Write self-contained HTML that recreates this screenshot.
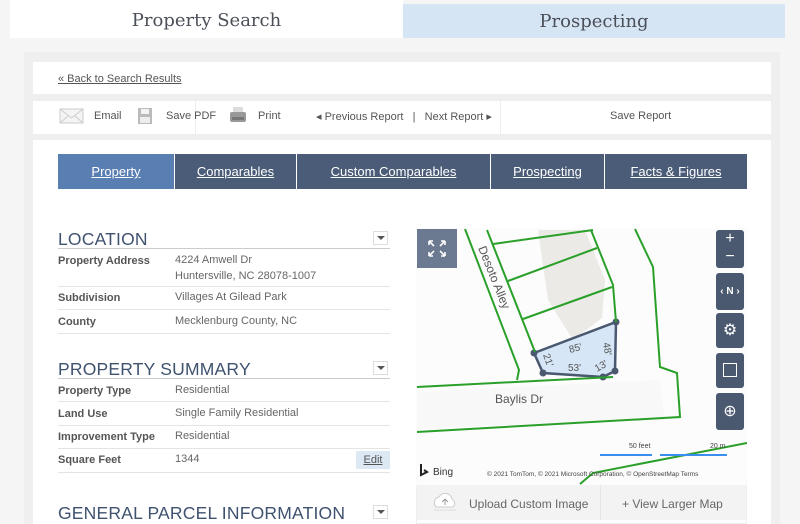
<!DOCTYPE html>
<html><head><style>
*{margin:0;padding:0;box-sizing:border-box}
body{width:800px;height:524px;overflow:hidden;background:#f5f5f5;font-family:"Liberation Sans",sans-serif;position:relative;color:#555}
.a{position:absolute}
.t{font-size:11px;color:#555}
.lbl{position:absolute;left:58px;font-size:11px;font-weight:bold;color:#555}
.val{position:absolute;left:175px;font-size:11px;color:#666;line-height:16px}
.ln{position:absolute;left:58px;width:332px;height:1px;background:#e4e4e4}
.h{position:absolute;left:58px;font-size:17.5px;color:#3f5270;letter-spacing:.2px}
.dd{position:absolute;left:373px;width:15px;height:14px;border:1px solid #ddd;background:#fff}
.dd:after{content:"";position:absolute;left:3px;top:4px;border-left:4px solid transparent;border-right:4px solid transparent;border-top:4px solid #555}
.nav a{position:absolute;top:154px;height:35px;line-height:35px;text-align:center;color:#fff;font-size:13px;text-decoration:underline;background:#4b5c78}
.ctl{position:absolute;left:716px;width:28px;background:#4a5870;border-radius:3px;color:#fff;text-align:center}
</style></head><body>
<div class="a" style="left:10px;top:0;width:393px;height:38px;background:#fff"></div>
<div class="a" style="left:10px;top:0;width:393px;height:38px;text-align:center;line-height:42px;font-family:'DejaVu Serif',serif;font-size:18px;color:#4a4f58">Property Search</div>
<div class="a" style="left:403px;top:4px;width:382px;height:34px;background:#d6e5f3;text-align:center;line-height:36px;font-family:'DejaVu Serif',serif;font-size:18px;color:#4a4f58">Prospecting</div>
<div class="a" style="left:24px;top:52px;width:756px;height:472px;background:#efefef"></div>
<div class="a" style="left:33px;top:62px;width:738px;height:32px;background:#fff"></div>
<div class="a t" style="left:58px;top:73px;text-decoration:underline">« Back to Search Results</div>
<div class="a" style="left:33px;top:101px;width:738px;height:33px;background:#fff"></div>
<div class="a" style="left:195px;top:101px;width:1px;height:33px;background:#eee"></div>
<div class="a" style="left:500px;top:101px;width:1px;height:33px;background:#eee"></div>
<svg class="a" style="left:59px;top:107px" width="26" height="18"><rect x="1" y="2" width="23" height="14" fill="#f4f4f4" stroke="#ccc"/><path d="M1 2 L12.5 11 L24 2 M1 16 L9 9 M24 16 L16 9" stroke="#ccc" fill="none"/></svg>
<div class="a t" style="left:94px;top:110px">Email</div>
<svg class="a" style="left:137px;top:107px" width="16" height="18"><rect x="1" y="1" width="14" height="16" fill="#bbb"/><rect x="4" y="2" width="8" height="5" fill="#f4f4f4"/><rect x="3" y="10" width="10" height="6" fill="#eee"/></svg>
<div class="a t" style="left:166px;top:110px">Save PDF</div>
<svg class="a" style="left:229px;top:106px" width="18" height="20"><rect x="4" y="1" width="10" height="6" fill="#ddd"/><rect x="1" y="6" width="16" height="10" rx="2" fill="#999"/><rect x="3" y="11" width="12" height="3" fill="#777"/></svg>
<div class="a t" style="left:258px;top:110px">Print</div>
<div class="a t" style="left:316px;top:110px">◂ Previous Report &nbsp;&nbsp;|&nbsp;&nbsp; Next Report ▸</div>
<div class="a t" style="left:610px;top:110px">Save Report</div>
<div class="a" style="left:33px;top:140px;width:738px;height:384px;background:#fff"></div>
<div class="nav">
<a style="left:58px;width:116px;background:#587eb2">Property</a>
<a style="left:175px;width:121px">Comparables</a>
<a style="left:297px;width:193px">Custom Comparables</a>
<a style="left:491px;width:113px">Prospecting</a>
<a style="left:605px;width:142px">Facts &amp; Figures</a>
</div>
<div class="h" style="top:229px">LOCATION</div><div class="dd" style="top:231px"></div>
<div class="ln" style="top:248px;background:#ccc"></div>
<div class="lbl" style="top:255px">Property Address</div><div class="val" style="top:252px">4224 Amwell Dr<br>Huntersville, NC 28078-1007</div>
<div class="ln" style="top:286px"></div>
<div class="lbl" style="top:292px">Subdivision</div><div class="val" style="top:289px">Villages At Gilead Park</div>
<div class="ln" style="top:309px"></div>
<div class="lbl" style="top:316px">County</div><div class="val" style="top:313px">Mecklenburg County, NC</div>
<div class="ln" style="top:333px"></div>
<div class="h" style="top:359px">PROPERTY SUMMARY</div><div class="dd" style="top:361px"></div>
<div class="ln" style="top:378px;background:#ccc"></div>
<div class="lbl" style="top:385px">Property Type</div><div class="val" style="top:382px">Residential</div>
<div class="ln" style="top:401px"></div>
<div class="lbl" style="top:408px">Land Use</div><div class="val" style="top:405px">Single Family Residential</div>
<div class="ln" style="top:425px"></div>
<div class="lbl" style="top:431px">Improvement Type</div><div class="val" style="top:428px">Residential</div>
<div class="ln" style="top:448px"></div>
<div class="lbl" style="top:454px">Square Feet</div><div class="val" style="top:451px">1344</div>
<div class="a t" style="left:356px;top:451px;width:34px;height:18px;background:#dce8f4;text-align:center;line-height:18px;text-decoration:underline">Edit</div>
<div class="ln" style="top:472px"></div>
<div class="h" style="top:503px">GENERAL PARCEL INFORMATION</div><div class="dd" style="top:505px"></div>
<div class="a" style="left:416px;top:228px;width:331px;height:296px;border:1px solid #eee;background:#fff"></div>
<svg class="a" style="left:416px;top:228px" width="331" height="257" viewBox="416 228 331 257">
<rect x="416" y="228" width="331" height="257" fill="#fcfcfc"/>
<path d="M538 230 L585 230 L605 280 L602 318 L573 340 L548 300 Z" fill="#eceae6"/>
<path d="M417 392 L660 380 L665 420 L417 428 Z" fill="#f8f8f8"/>
<path d="M534 353 L616 322 L615 371 L603 377 L543 373 Z" fill="#d6e6f6" stroke="#4a5870" stroke-width="2.5"/>
<g fill="#4a5870"><circle cx="534" cy="353" r="3.5"/><circle cx="616" cy="322" r="3.5"/><circle cx="615" cy="371" r="3.5"/><circle cx="603" cy="377" r="3.5"/><circle cx="543" cy="373" r="3.5"/></g>
<g fill="none" stroke="#2aa02a" stroke-width="2">
<path d="M465 229 L519 370 L517 380"/>
<path d="M487 230 L535 352"/>
<path d="M493 244 L593 230 M508 281 L597 248 M523 319 L612 287"/>
<path d="M591 230 L613 285 L616 322"/>
<path d="M635 229 L653 267 L660 367 L677 373 L680 417 L417 432"/>
<path d="M417 387 L613 377"/>
<path d="M580 484 L593 473 L747 443"/>
</g>
<g font-family="Liberation Sans" font-size="10" fill="#555">
<text x="570" y="353" transform="rotate(-15 570 353)">85'</text>
<text x="568" y="371">53'</text>
<text x="543" y="355" transform="rotate(70 543 355)">21'</text>
<text x="603" y="343" transform="rotate(80 603 343)">48'</text>
<text x="597" y="372" transform="rotate(-30 597 372)">13'</text>
</g>
<text x="495" y="403" font-family="Liberation Sans" font-size="12" fill="#555">Baylis Dr</text>
<text x="478" y="248" font-family="Liberation Sans" font-size="12" fill="#555" transform="rotate(68 478 248)">Desoto Alley</text>
<rect x="600" y="454" width="52" height="2" fill="#3a8ef0"/><rect x="660" y="454" width="67" height="2" fill="#3a8ef0"/>
<text x="629" y="448" font-family="Liberation Sans" font-size="7" fill="#444">50 feet</text>
<text x="710" y="448" font-family="Liberation Sans" font-size="7" fill="#444">20 m</text>
<path d="M421 464 v11 l6-3 -3-2" stroke="#222" stroke-width="2" fill="none"/>
<text x="433" y="475" font-family="Liberation Sans" font-size="10" fill="#333">Bing</text>
<text x="487" y="476" font-family="Liberation Sans" font-size="6.5" fill="#444">© 2021 TomTom, © 2021 Microsoft Corporation, © OpenStreetMap  Terms</text>
</svg>
<svg class="a" style="left:417px;top:229px" width="40" height="39"><rect width="40" height="39" fill="#6b7a90"/><g stroke="#fff" stroke-width="1.6" fill="none"><path d="M12 12 l5 5 M12 12 h4 M12 12 v4"/><path d="M28 12 l-5 5 M28 12 h-4 M28 12 v4"/><path d="M12 27 l5 -5 M12 27 h4 M12 27 v-4"/><path d="M28 27 l-5 -5 M28 27 h-4 M28 27 v-4"/></g></svg>
<div class="ctl" style="top:230px;height:38px;font-size:16px;line-height:18px">+<br>−</div>
<div class="ctl" style="top:273px;height:37px;font-size:10px;line-height:37px;font-weight:bold">‹ N ›</div>
<div class="ctl" style="top:313px;height:35px;font-size:16px;line-height:35px">⚙</div>
<div class="ctl" style="top:353px;height:35px"><div style="margin:10px auto;width:14px;height:14px;border:1.5px solid #fff"></div></div>
<div class="ctl" style="top:393px;height:37px;font-size:16px;line-height:37px">⊕</div>
<div class="a" style="left:417px;top:485px;width:329px;height:35px;background:#f3f3f3"></div>
<div class="a" style="left:600px;top:485px;width:1px;height:35px;background:#e4e4e4"></div>
<svg class="a" style="left:431px;top:491px" width="28" height="22"><path d="M5 16 a6 6 0 0 1 3-10 a7 7 0 0 1 13 2 a5 5 0 0 1 1 8 Z" fill="#fff" stroke="#ccc"/><path d="M14 8 v6 M11 11 l3-3 3 3" stroke="#999" fill="none"/><path d="M3 19 h22" stroke="#ddd"/></svg>
<div class="a t" style="left:469px;top:497px;font-size:12px;color:#666">Upload Custom Image</div>
<div class="a t" style="left:622px;top:497px;font-size:12px;color:#666">+ View Larger Map</div>
</body></html>
